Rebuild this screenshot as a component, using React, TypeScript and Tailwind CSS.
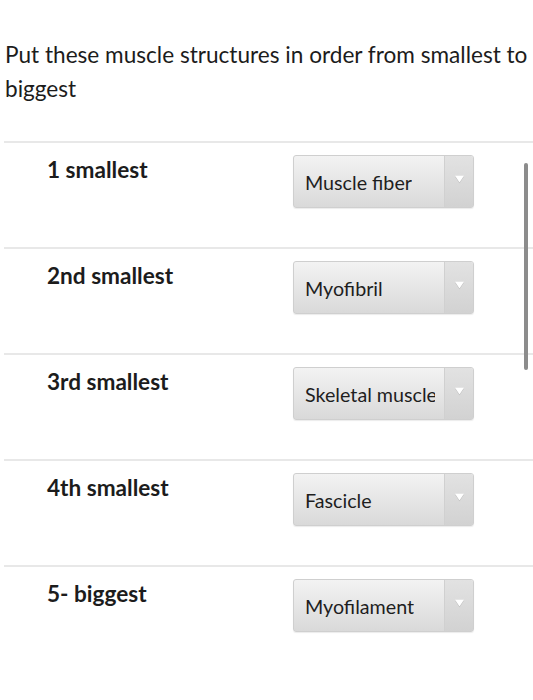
const rows = [
  { label: '1 smallest', value: 'Muscle fiber' },
  { label: '2nd smallest', value: 'Myofibril' },
  { label: '3rd smallest', value: 'Skeletal muscle' },
  { label: '4th smallest', value: 'Fascicle' },
  { label: '5- biggest', value: 'Myofilament' },
]

function Dropdown({ value }: { value: string }) {
  return (
    <div className="mt-[12px] flex h-[53px] w-[181px] overflow-hidden rounded-[3px] border border-[#cfcfcf] bg-gradient-to-b from-[#f3f3f3] to-[#d9d9d9] shadow-[0_1px_1px_rgba(0,0,0,0.08)]">
      <div className="flex min-w-0 flex-1 items-center pl-[11px] pr-[9px] pt-[3px] text-[19.7px] text-[#1e1e1e]">
        <span className="block overflow-hidden whitespace-nowrap">{value}</span>
      </div>
      <div className="flex w-[29px] shrink-0 items-center justify-center border-l border-[#d0d0d0] bg-gradient-to-b from-[#e2e2e2] to-[#d2d2d2] pb-[4px]">
        <svg width="11" height="9" viewBox="0 0 11 9">
          <path d="M1 1.6 L10 1.6 L5.5 8.2 Z" fill="#b8b8b8" />
          <path d="M1 0.8 L10 0.8 L5.5 7.4 Z" fill="#ffffff" />
        </svg>
      </div>
    </div>
  )
}

export default function App() {
  return (
    <div className="relative h-[700px] w-[533px] overflow-hidden bg-white font-['Lato',sans-serif] text-[#1c1c1c]">
      <h1 className="pl-[5px] pt-[38px] text-[22.6px] font-normal leading-[34px]">
        Put these muscle structures in order from smallest to biggest
      </h1>

      <div className="mt-[35px] ml-[4px]">
        {rows.map((row) => (
          <div key={row.label} className="flex h-[106px] border-t-2 border-[#e8e8e8]">
            <div className="w-[289px] pl-[43px] pt-[13px] text-[22.6px] font-bold leading-[28px]">
              {row.label}
            </div>
            <Dropdown value={row.value} />
          </div>
        ))}
      </div>

      {/* scroll indicator */}
      <div className="absolute left-[524px] top-[163px] h-[207px] w-[4px] rounded-full bg-[#8c8c8c]" />
    </div>
  )
}
